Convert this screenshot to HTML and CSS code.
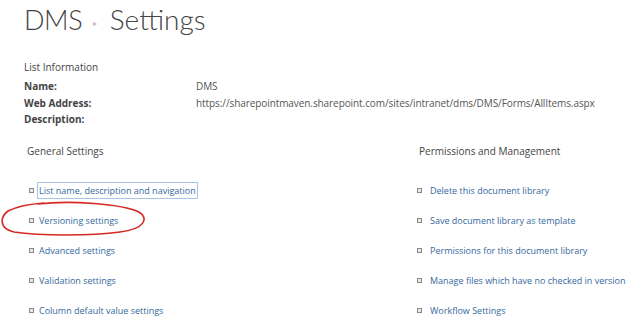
FILE: index.html
```html
<!DOCTYPE html>
<html>

<head>
    <meta name="viewport" content="width=device-width, initial-scale=1">
    <link rel="stylesheet" href="styles.css">
</head>

<body>
    <div class="page">
        <h1 class="title">
            <span>DMS</span>
            <span class="crumb">&#9656;</span>
            <span class="here">Settings</span>
        </h1>

        <div class="info">
            <div class="info-head">List Information</div>
            <div class="info-row">
                <div class="label">Name:</div>
                <div class="value">DMS</div>
            </div>
            <div class="info-row">
                <div class="label">Web Address:</div>
                <div class="value">https://sharepointmaven.sharepoint.com/sites/intranet/dms/DMS/Forms/AllItems.aspx</div>
            </div>
            <div class="info-row">
                <div class="label">Description:</div>
                <div class="value"></div>
            </div>
        </div>

        <div class="columns">
            <div class="col col-left">
                <div class="col-head">General Settings</div>
                <ul class="links">
                    <li><a class="focused" href="#">List name, description and navigation</a></li>
                    <li><a href="#">Versioning settings</a></li>
                    <li><a href="#">Advanced settings</a></li>
                    <li><a href="#">Validation settings</a></li>
                    <li><a href="#">Column default value settings</a></li>
                </ul>
            </div>
            <div class="col col-right">
                <div class="col-head">Permissions and Management</div>
                <ul class="links">
                    <li><a href="#">Delete this document library</a></li>
                    <li><a href="#">Save document library as template</a></li>
                    <li><a href="#">Permissions for this document library</a></li>
                    <li><a href="#">Manage files which have no checked in version</a></li>
                    <li><a href="#">Workflow Settings</a></li>
                </ul>
            </div>
        </div>

        <!-- hand drawn circle round the versioning link -->
        <svg class="scribble" width="150" height="40" viewBox="0 0 150 40">
            <path fill="none" stroke="#d42a22" stroke-width="1.6" stroke-linecap="round"
                d="M38 3 C70 -1 122 3 139 11 C149 17 145 28 120 31 C92 35 40 35 14 31 C0 28 -1 17 8 10 C18 5 30 3 44 2" />
        </svg>
    </div>
</body>

</html>
```

FILE: styles.css
```css
body {
    margin: 0;
    background: #fff;
    font-family: "Open Sans", "Noto Sans", sans-serif;
    color: #444;
}

.page {
    position: relative;
    padding: 0 0 0 24px;
}

.title {
    margin: 0;
    font-family: "Lato", "Open Sans", sans-serif;
    font-size: 27px;
    font-weight: 300;
    line-height: 38px;
    letter-spacing: -0.4px;
    color: #444;
}

.title .here {
    font-size: 28px;
    letter-spacing: 0;
}

.crumb {
    font-size: 8px;
    color: #bbb;
    vertical-align: middle;
    margin: 0 6px 0 4px;
}

.info {
    margin-top: 17px;
    font-size: 10px;
}

.info-head {
    line-height: 16px;
    margin-bottom: 3px;
}

.info-row {
    display: flex;
    line-height: 16.5px;
}

.label {
    width: 172px;
    font-weight: bold;
}

.value {
    color: #555;
    letter-spacing: -0.08px;
}

.columns {
    display: flex;
    margin-top: 15px;
    font-size: 10px;
    white-space: nowrap;
}

.col-left {
    flex: none;
    width: 392px;
    padding-left: 3px;
}

.col-head {
    line-height: 16px;
    color: #444;
}

.links {
    list-style: none;
    margin: 17px 0 0 0;
    padding: 0;
    font-size: 9px;
}

.links li {
    display: flex;
    align-items: center;
    height: 30px;
}

.links li::before {
    content: "";
    flex: none;
    width: 3px;
    height: 3px;
    border: 1px solid #8a8a8a;
    background: #e8e8e8;
    margin: 0 5px 0 2px;
}

.col-right .links li::before {
    margin: 0 8px 0 -2px;
}

.links a {
    color: #35699e;
    text-decoration: none;
}

.links a.focused {
    outline: 1px solid #a7c4e6;
    outline-offset: 1px;
}

.scribble {
    position: absolute;
    left: 0;
    top: 201px;
}
```
